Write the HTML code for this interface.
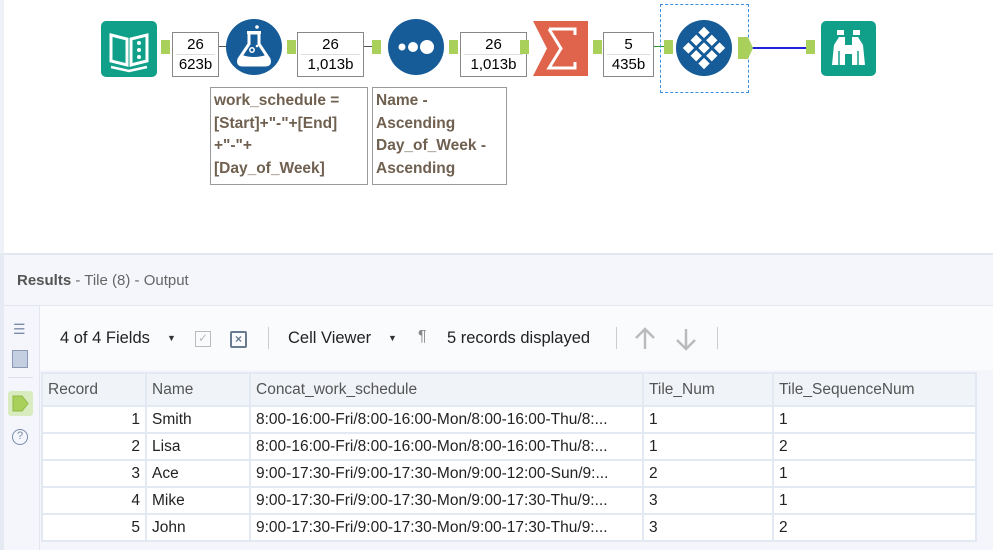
<!DOCTYPE html>
<html><head><meta charset="utf-8"><style>
*{margin:0;padding:0;box-sizing:border-box}
body{width:993px;height:550px;overflow:hidden;background:#fff;font-family:"Liberation Sans",sans-serif;position:relative}
.abs{position:absolute}
.rec{position:absolute;background:#fff;border:1px solid #888;font-size:15px;text-align:center;line-height:17px;padding-top:3px;color:#000}
.rec hr{border:0;border-top:1px solid #ddd;margin:1px 3px}
.ann{position:absolute;border:1.5px solid #999;background:#fff;color:#6f6050;font-weight:bold;font-size:15.5px;line-height:22.5px;padding:2px 3px;white-space:nowrap}
.anc{position:absolute;width:9px;height:14px;background:#a8d05a}
table{border-collapse:collapse;font-size:15.5px;color:#222}
td{border:2px solid #e3e9f2;height:27px;padding:0 5px;background:#fff;white-space:nowrap}
tr.h td{background:#f0f3f8;color:#555;height:33px}
</style></head><body>
<div class="abs" style="left:0;top:0;width:4px;height:255px;background:#eef1f7"></div>
<div class="abs" style="left:215px;top:46px;width:15px;height:1px;background:#555"></div>
<div class="abs" style="left:360px;top:46px;width:20px;height:1px;background:#555"></div>
<div class="abs" style="left:650px;top:46px;width:16px;height:1px;background:#2a9a2a"></div>
<div class="abs" style="left:752px;top:47px;width:60px;height:1.5px;background:#2222dd"></div>
<svg class="abs" style="left:101px;top:21px" width="56" height="56" viewBox="0 0 56 56"><rect x="0" y="0" width="56" height="56" rx="5" fill="#10a08a"/><path d="M10 14 L26 18 L26 44 L10 40Z M30 18 L46 14 L46 40 L30 44Z" fill="none" stroke="#fff" stroke-width="3"/><circle cx="38" cy="22" r="2" fill="#fff"/><circle cx="38" cy="29" r="2" fill="#fff"/><circle cx="38" cy="36" r="2" fill="#fff"/><path d="M10 46 L28 50 L46 46" stroke="#fff" stroke-width="2.5" fill="none"/></svg>
<div class="anc" style="left:161px;top:40px"></div>
<div class="rec" style="left:172px;top:32px;width:47px;height:45px">26<hr>623b</div>
<svg class="abs" style="left:226px;top:19px" width="56" height="56"><circle cx="28" cy="28" r="28" fill="#155c99"/><path d="M23 14 L23 25 L13 40 Q11 46 17 46 L39 46 Q45 46 43 40 L33 25 L33 14Z" fill="none" stroke="#fff" stroke-width="3"/><path d="M16 36 Q28 40 40 36 L43 42 Q43 46 39 46 L17 46 Q13 46 13 42Z" fill="#fff"/><circle cx="26" cy="31" r="2.2" fill="none" stroke="#fff" stroke-width="1.5"/><circle cx="31" cy="27" r="1.3" fill="#fff"/><circle cx="31" cy="8" r="1.8" fill="#fff"/><rect x="21" y="12" width="14" height="3" fill="#fff"/></svg>
<div class="anc" style="left:287px;top:40px"></div>
<div class="rec" style="left:297px;top:32px;width:67px;height:45px">26<hr>1,013b</div>
<div class="anc" style="left:372px;top:40px"></div>
<svg class="abs" style="left:388px;top:19px" width="56" height="56"><circle cx="28" cy="28" r="28" fill="#155c99"/><circle cx="14" cy="28" r="3.5" fill="#fff"/><circle cx="25" cy="28" r="5" fill="#fff"/><circle cx="39" cy="28" r="7" fill="#fff"/></svg>
<div class="anc" style="left:449px;top:40px"></div>
<div class="rec" style="left:460px;top:32px;width:67px;height:45px">26<hr>1,013b</div>
<div class="anc" style="left:520px;top:40px"></div>
<svg class="abs" style="left:533px;top:21px" width="55" height="55"><path d="M0 0 H55 V55 H0 L14 27.5Z" fill="#e0634b"/><path d="M16 8 H42 V14 M16 8 L28 27.5 L16 47 H42 V41" stroke="#fff" stroke-width="3" fill="none"/></svg>
<div class="anc" style="left:593px;top:40px"></div>
<div class="rec" style="left:603px;top:32px;width:51px;height:45px">5<hr>435b</div>
<div class="abs" style="left:660px;top:4px;width:89px;height:89px;border:1.5px dashed #3b8fe0"></div>
<div class="anc" style="left:664px;top:40px"></div>
<svg class="abs" style="left:676px;top:20px" width="56" height="56"><circle cx="28" cy="28" r="28" fill="#155c99"/><g fill="#fff" transform="rotate(45 28 28)"><rect x="13" y="13" width="8" height="8"/><rect x="24" y="13" width="8" height="8"/><rect x="35" y="13" width="8" height="8"/><rect x="13" y="24" width="8" height="8"/><rect x="24" y="24" width="8" height="8"/><rect x="35" y="24" width="8" height="8"/><rect x="13" y="35" width="8" height="8"/><rect x="24" y="35" width="8" height="8"/><rect x="35" y="35" width="8" height="8"/></g></svg>
<svg class="abs" style="left:738px;top:37px" width="16" height="22"><path d="M0 0 H10 L15 11 L10 22 H0Z" fill="#a8d05a"/></svg>
<div class="anc" style="left:806px;top:40px"></div>
<svg class="abs" style="left:821px;top:21px" width="55" height="55"><rect width="55" height="55" rx="5" fill="#10a08a"/><path d="M11 44 L13 24 L18 16 H24 V44Z M31 44 V16 H37 L42 24 L44 44Z" fill="#fff"/><rect x="24" y="24" width="7" height="9" fill="#fff"/><path d="M18 30 V44 M37 30 V44" stroke="#10a08a" stroke-width="1.5"/><rect x="16" y="9" width="7" height="5" fill="#fff"/><rect x="32" y="9" width="7" height="5" fill="#fff"/></svg>
<div class="ann" style="left:210px;top:87px;width:158px;height:98px">work_schedule =<br>[Start]+"-"+[End]<br>+"-"+<br>[Day_of_Week]</div>
<div class="ann" style="left:372px;top:87px;width:135px;height:98px">Name -<br>Ascending<br>Day_of_Week -<br>Ascending</div>
<div class="abs" style="left:0;top:253px;width:993px;height:297px;background:#f4f6fb;border-top:2px solid #e4e8f0"></div>
<div class="abs" style="left:0;top:253px;width:4px;height:297px;background:#e6eaf2"></div>
<div class="abs" style="left:17px;top:272px;font-size:15px;color:#666"><b style="color:#555">Results</b> - Tile (8) - Output</div>
<div class="abs" style="left:4px;top:305px;width:989px;height:1px;background:#e2e6ee"></div>
<div class="abs" style="left:39px;top:306px;width:1px;height:244px;background:#e2e6ee"></div>
<div class="abs" style="left:40px;top:306px;width:953px;height:64px;background:#fafbfd"></div>
<div class="abs" style="left:13px;top:322px;font-size:14px;color:#7a8ca8;line-height:14px">☰</div>
<div class="abs" style="left:12px;top:350px;width:16px;height:18px;background:#c4cfe2;border:1px solid #8a9ab5"></div>
<div class="abs" style="left:8px;top:377px;width:25px;height:1px;background:#dde2ea"></div>
<div class="abs" style="left:8px;top:391px;width:25px;height:25px;background:#d8ecc0;border-radius:3px"></div>
<svg class="abs" style="left:12px;top:395px" width="17" height="17"><path d="M1 1 H10 L16 8.5 L10 16 H1Z" fill="#a8d05a" stroke="#8fba42"/></svg>
<div class="abs" style="left:12px;top:429px;width:16px;height:16px;border:1.5px solid #7a8ca8;border-radius:50%;font-size:11px;text-align:center;line-height:13px;color:#7a8ca8">?</div>
<div class="abs" style="left:60px;top:329px;font-size:16.5px;color:#222">4 of 4 Fields</div>
<div class="abs" style="left:167px;top:333px;font-size:9px;color:#333">▼</div>
<div class="abs" style="left:195px;top:331px;width:16px;height:16px;border:1.5px solid #bbb;font-size:12px;line-height:13px;color:#bbb;text-align:center">✓</div>
<div class="abs" style="left:230px;top:331px;width:17px;height:17px;border:2px solid #6a7a90;border-radius:2px;font-size:12px;line-height:13px;color:#6a7a90;text-align:center;font-weight:bold">×</div>
<div class="abs" style="left:268px;top:327px;width:1px;height:22px;background:#ccc"></div>
<div class="abs" style="left:288px;top:329px;font-size:16.5px;color:#222">Cell Viewer</div>
<div class="abs" style="left:388px;top:333px;font-size:9px;color:#333">▼</div>
<div class="abs" style="left:418px;top:328px;font-size:16px;color:#888">¶</div>
<div class="abs" style="left:447px;top:329px;font-size:16.5px;color:#222">5 records displayed</div>
<div class="abs" style="left:616px;top:327px;width:1px;height:22px;background:#ccc"></div>
<svg class="abs" style="left:632px;top:326px" width="70" height="26"><path d="M13 3 V23 M4 12 L13 3 L22 12 M54 3 V23 M45 14 L54 23 L63 14" stroke="#bbb" stroke-width="2.5" fill="none"/></svg>
<div class="abs" style="left:717px;top:327px;width:1px;height:22px;background:#ccc"></div>
<table class="abs" style="left:41px;top:372px">
<tr class="h"><td style="width:104px">Record</td><td style="width:104px">Name</td><td style="width:393px">Concat_work_schedule</td><td style="width:130px">Tile_Num</td><td style="width:203px">Tile_SequenceNum</td></tr>
<tr><td style="text-align:right">1</td><td>Smith</td><td>8:00-16:00-Fri/8:00-16:00-Mon/8:00-16:00-Thu/8:...</td><td>1</td><td>1</td></tr>
<tr><td style="text-align:right">2</td><td>Lisa</td><td>8:00-16:00-Fri/8:00-16:00-Mon/8:00-16:00-Thu/8:...</td><td>1</td><td>2</td></tr>
<tr><td style="text-align:right">3</td><td>Ace</td><td>9:00-17:30-Fri/9:00-17:30-Mon/9:00-12:00-Sun/9:...</td><td>2</td><td>1</td></tr>
<tr><td style="text-align:right">4</td><td>Mike</td><td>9:00-17:30-Fri/9:00-17:30-Mon/9:00-17:30-Thu/9:...</td><td>3</td><td>1</td></tr>
<tr><td style="text-align:right">5</td><td>John</td><td>9:00-17:30-Fri/9:00-17:30-Mon/9:00-17:30-Thu/9:...</td><td>3</td><td>2</td></tr>
</table>
</body></html>
